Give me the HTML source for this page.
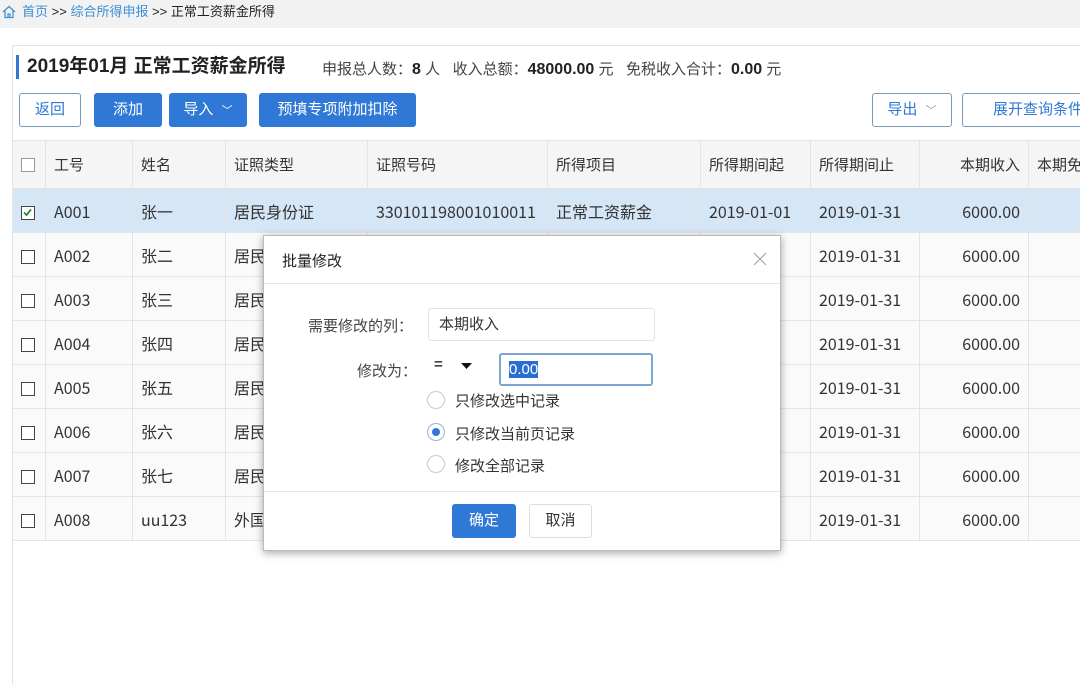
<!DOCTYPE html>
<html><head><meta charset="utf-8"><style>
*{box-sizing:border-box;margin:0;padding:0}
body{width:1080px;height:668px;background:#fff;font-family:"Liberation Sans","Noto Sans CJK SC",sans-serif;color:#333;position:relative;overflow:hidden;font-size:15px}
.bc{position:absolute;left:0;top:0;width:1080px;height:28px;background:#f2f2f2;font-size:13px;line-height:24px;padding-left:22px;color:#222}
.bc a{color:#3a8fd6}
.panel{position:absolute;left:12px;top:45px;width:1080px;height:640px;border-left:1px solid #e4e4e4;border-top:1px solid #e4e4e4}
.title{position:absolute;left:16px;top:55px;font-size:19px;font-weight:bold;color:#222;border-left:3px solid #2f78d6;padding-left:8px;line-height:24px}
.stat{position:absolute;left:322px;top:58px;font-size:15px;color:#444}
.stat b{color:#222;font-size:16px}
.btn{position:absolute;top:93px;height:34px;border-radius:3px;font-size:15px;text-align:center;line-height:32px}
.pb{background:#2f78d6;color:#fff;border:1px solid #2f78d6}
.ob{background:#fff;color:#2f78d6;border:1px solid #7a99b8}
table{position:absolute;left:12px;top:140px;border-collapse:collapse;table-layout:fixed;width:1076px}
td{border:1px solid #e4e4e4;height:44px;padding:0 8px;font-size:16px;color:#333;white-space:nowrap;overflow:hidden;background:#fafafa;font-family:"Noto Sans CJK SC",sans-serif;line-height:20px;vertical-align:middle}
tr.h td{height:48px;background:#f5f5f5;font-size:15px}
tr.s td{background:#d5e6f7}
.r{text-align:right}
.cb{display:inline-block;width:14px;height:14px;border:1.5px solid #444;vertical-align:middle;position:relative;background:#fff}
.dlg{position:absolute;left:263px;top:235px;width:518px;height:316px;background:#fff;box-shadow:0 2px 8px rgba(0,0,0,.35);border:1px solid #bbb}
.dh{height:48px;border-bottom:1px solid #e6e6e6;padding-left:18px;line-height:52px;font-size:15px;color:#222}
.lab{position:absolute;font-size:15px;color:#444}
.rad{position:absolute;left:163px;width:18px;height:18px;border:1px solid #ccc;border-radius:50%}
.rl{position:absolute;left:191px;font-size:15px;color:#333}
</style></head><body>
<div class="bc"><svg style="position:absolute;left:2px;top:5px" width="14" height="14" viewBox="0 0 14 14"><path d="M1 7 L7 1.5 L13 7 M3 5.5 V12.5 H11 V5.5 M6 12.5 V9 H8 V12.5" fill="none" stroke="#3a8fd6" stroke-width="1.2"/></svg><a>首页</a> &gt;&gt; <a>综合所得申报</a> &gt;&gt; 正常工资薪金所得</div>
<div class="panel"></div>
<div class="title">2019年01月 正常工资薪金所得</div>
<div class="stat">申报总人数：<b>8</b> 人&nbsp;&nbsp; 收入总额：<b>48000.00</b> 元&nbsp;&nbsp; 免税收入合计：<b>0.00</b> 元</div>
<div class="btn ob" style="left:19px;width:62px">返回</div>
<div class="btn pb" style="left:94px;width:68px">添加</div>
<div class="btn pb" style="left:169px;width:78px">导入 &nbsp;<span style="font-size:11px">﹀</span></div>
<div class="btn pb" style="left:259px;width:157px">预填专项附加扣除</div>
<div class="btn ob" style="left:872px;width:80px">导出 &nbsp;<span style="font-size:11px;color:#999">﹀</span></div>
<div class="btn ob" style="left:962px;width:140px;text-align:left;padding-left:30px">展开查询条件</div>
<table>
<colgroup><col style="width:33px"><col style="width:87px"><col style="width:93px"><col style="width:142px"><col style="width:180px"><col style="width:153px"><col style="width:110px"><col style="width:109px"><col style="width:109px"><col style="width:60px"></colgroup>
<tr class="h"><td><span class="cb" style="border-color:#999;border-width:1px"></span></td><td>工号</td><td>姓名</td><td>证照类型</td><td>证照号码</td><td>所得项目</td><td>所得期间起</td><td>所得期间止</td><td class="r">本期收入</td><td>本期免</td></tr>
<tr class="s"><td><span class="cb"><svg style="position:absolute;left:0;top:0" width="11" height="11" viewBox="0 0 11 11"><path d="M2 5.5 L4.5 8 L9 2.5" fill="none" stroke="#2a8a2a" stroke-width="1.8"/></svg></span></td><td>A001</td><td>张一</td><td>居民身份证</td><td>330101198001010011</td><td>正常工资薪金</td><td>2019-01-01</td><td>2019-01-31</td><td class="r">6000.00</td><td></td></tr>
<tr><td><span class="cb"></span></td><td>A002</td><td>张二</td><td>居民</td><td></td><td></td><td>01</td><td>2019-01-31</td><td class="r">6000.00</td><td></td></tr>
<tr><td><span class="cb"></span></td><td>A003</td><td>张三</td><td>居民</td><td></td><td></td><td>01</td><td>2019-01-31</td><td class="r">6000.00</td><td></td></tr>
<tr><td><span class="cb"></span></td><td>A004</td><td>张四</td><td>居民</td><td></td><td></td><td>01</td><td>2019-01-31</td><td class="r">6000.00</td><td></td></tr>
<tr><td><span class="cb"></span></td><td>A005</td><td>张五</td><td>居民</td><td></td><td></td><td>01</td><td>2019-01-31</td><td class="r">6000.00</td><td></td></tr>
<tr><td><span class="cb"></span></td><td>A006</td><td>张六</td><td>居民</td><td></td><td></td><td>01</td><td>2019-01-31</td><td class="r">6000.00</td><td></td></tr>
<tr><td><span class="cb"></span></td><td>A007</td><td>张七</td><td>居民</td><td></td><td></td><td>01</td><td>2019-01-31</td><td class="r">6000.00</td><td></td></tr>
<tr><td><span class="cb"></span></td><td>A008</td><td>uu123</td><td>外国</td><td></td><td></td><td>01</td><td>2019-01-31</td><td class="r">6000.00</td><td></td></tr>
</table>
<div class="dlg">
<div class="dh">批量修改</div>
<svg style="position:absolute;left:489px;top:16px" width="14" height="14" viewBox="0 0 14 14"><path d="M1 1 L13 13 M13 1 L1 13" stroke="#aaa" stroke-width="1.2"/></svg>
<div class="lab" style="left:44px;top:79px">需要修改的列：</div>
<div style="position:absolute;left:164px;top:72px;width:227px;height:33px;border:1px solid #e4e4e4;border-radius:3px;padding-left:10px;line-height:31px;font-size:15px">本期收入</div>
<div class="lab" style="left:93px;top:124px">修改为：</div>
<div class="lab" style="left:170px;top:120px;font-weight:bold">=</div>
<svg style="position:absolute;left:197px;top:127px" width="11" height="7"><path d="M0 0 H11 L5.5 6Z" fill="#111"/></svg>
<div style="position:absolute;left:235px;top:117px;width:154px;height:33px;border:2px solid #7ba4cf;border-radius:3px;padding-left:8px;line-height:29px;font-size:15px"><span style="background:#2a6fd0;color:#fff">0.00</span></div>
<div class="rad" style="top:155px"></div><div class="rl" style="top:154px">只修改选中记录</div>
<div class="rad" style="top:187px;border-color:#8fb4e3"><div style="position:absolute;left:4px;top:4px;width:8px;height:8px;border-radius:50%;background:#2f78d6"></div></div><div class="rl" style="top:187px">只修改当前页记录</div>
<div class="rad" style="top:219px"></div><div class="rl" style="top:219px">修改全部记录</div>
<div style="position:absolute;left:0;top:255px;width:516px;border-top:1px solid #e6e6e6"></div>
<div style="position:absolute;left:188px;top:268px;width:64px;height:34px;background:#2f78d6;border-radius:3px;color:#fff;text-align:center;line-height:34px;font-size:15px">确定</div>
<div style="position:absolute;left:265px;top:268px;width:63px;height:34px;border:1px solid #ddd;border-radius:3px;text-align:center;line-height:32px;font-size:15px">取消</div>
</div>
</body></html>
